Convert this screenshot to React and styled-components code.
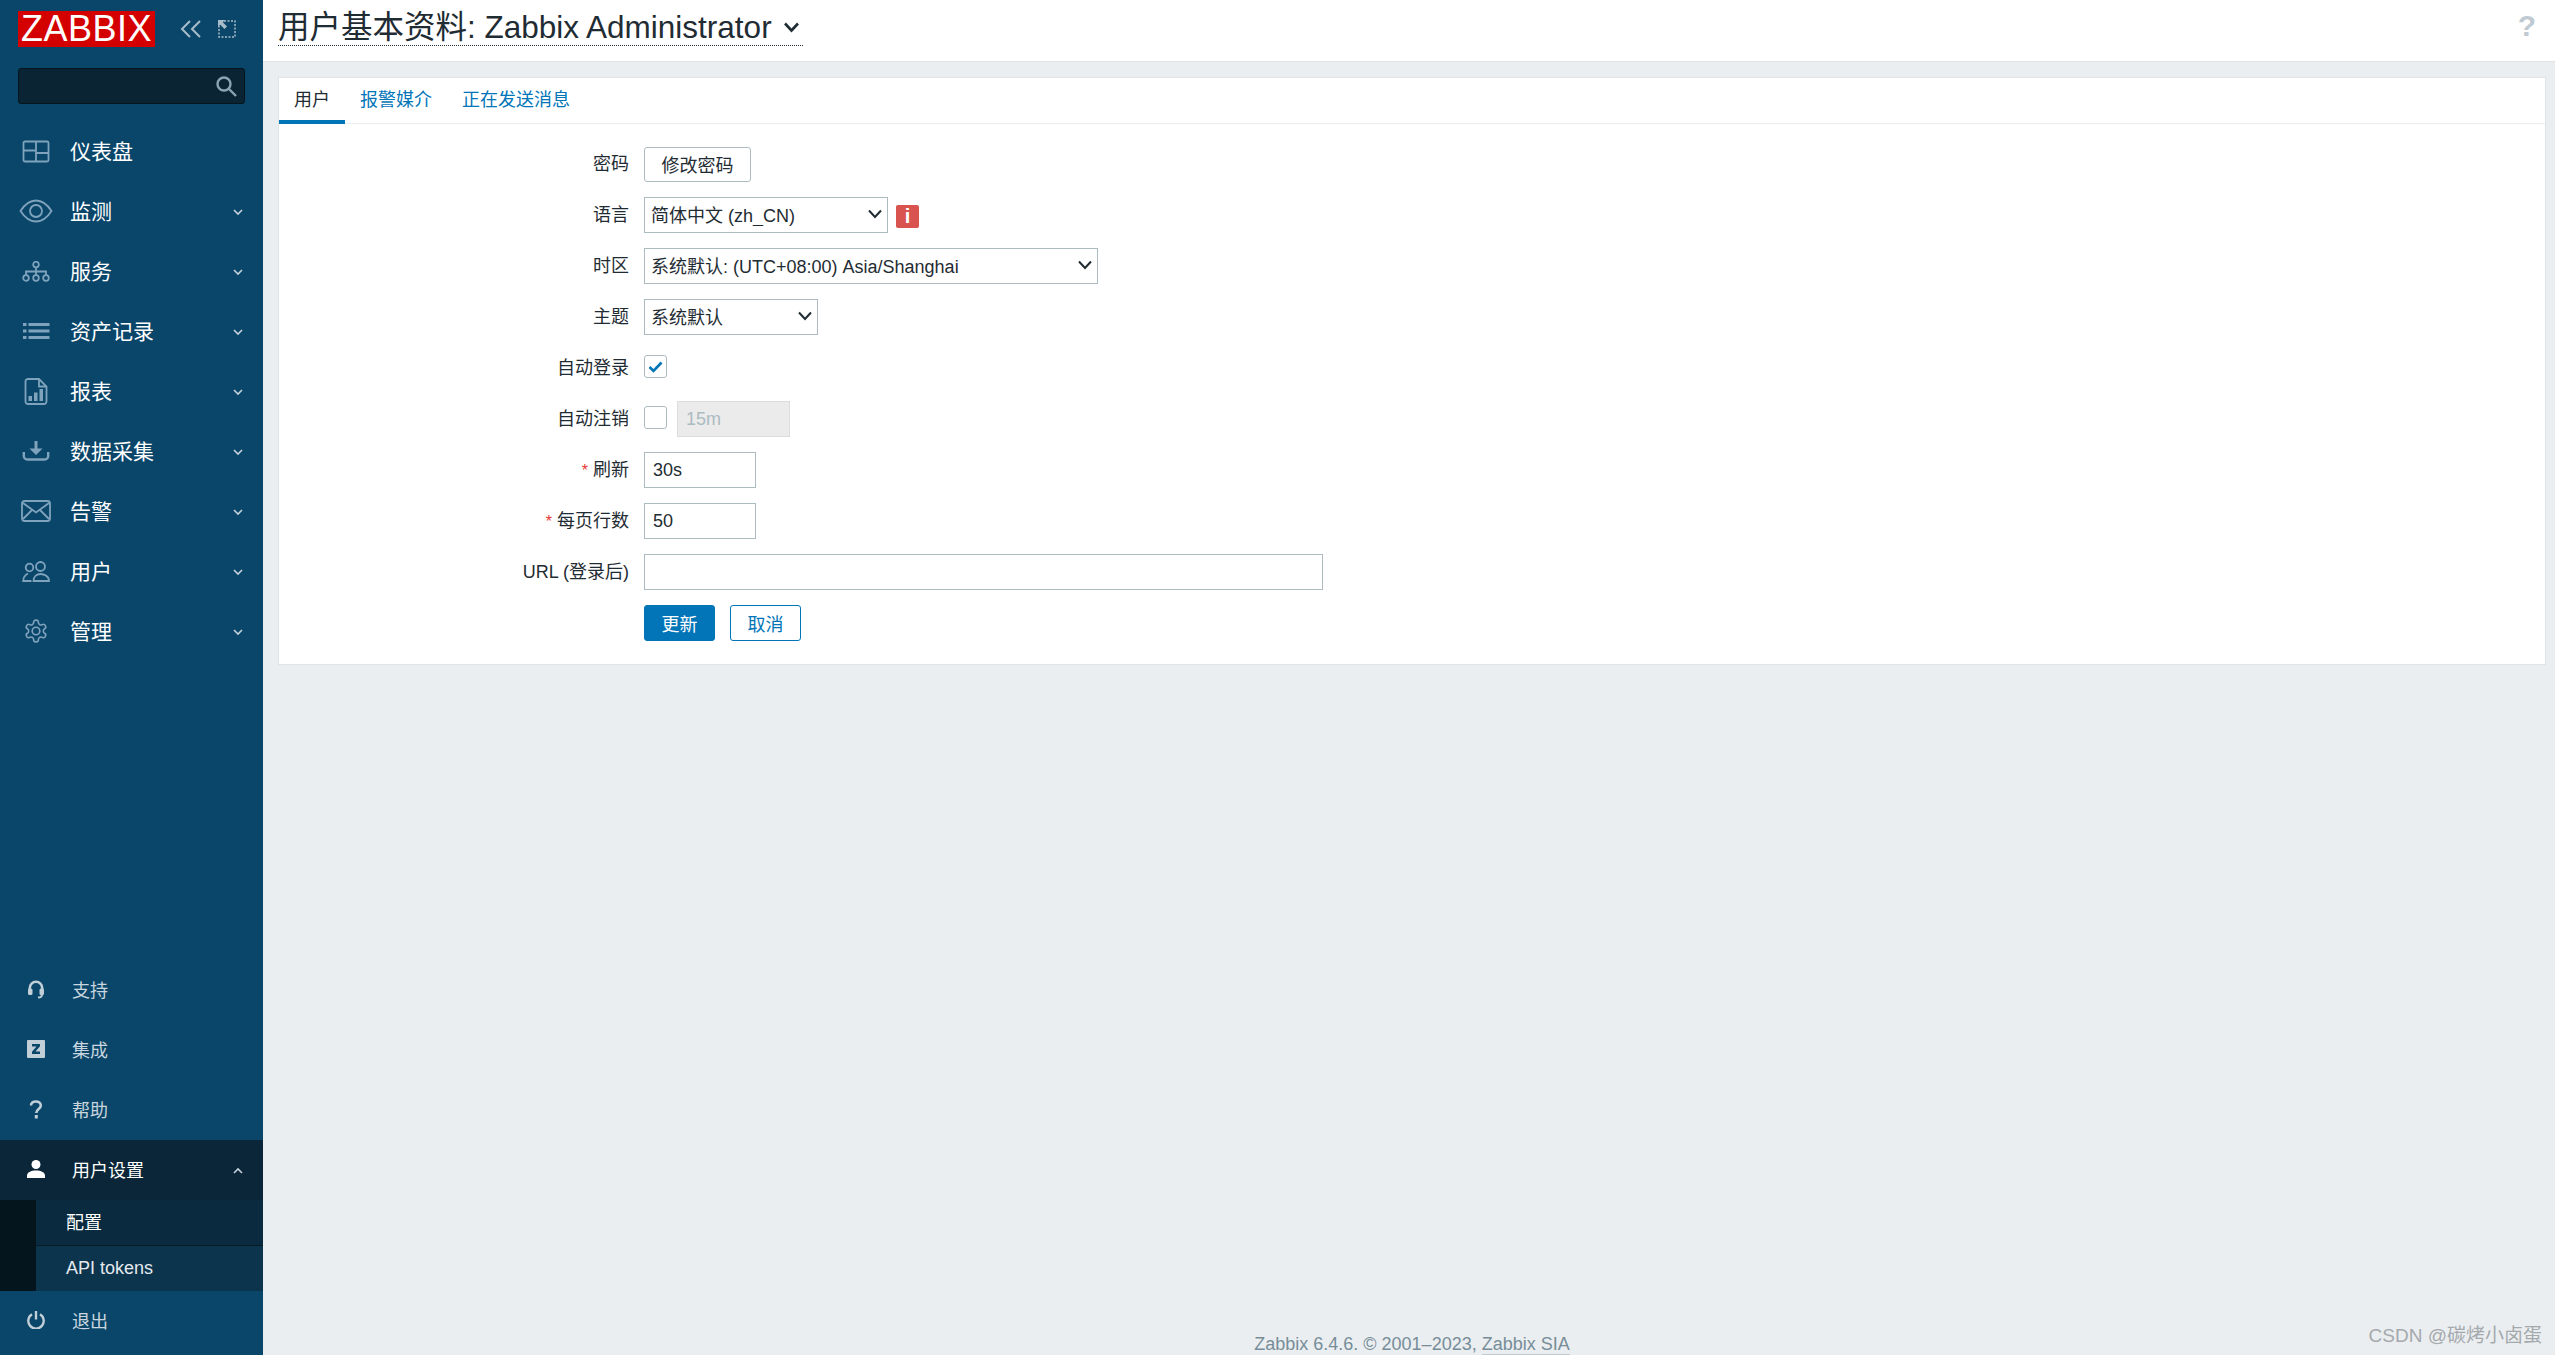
import { styled, createGlobalStyle } from 'styled-components';

const FONT = `"Liberation Sans", "Noto Sans CJK SC", sans-serif`;

const GlobalStyle = createGlobalStyle`
  html, body {
    margin: 0;
    padding: 0;
    background: #ebeef0;
    font-family: ${FONT};
    color: #1f2c33;
  }
  * {
    box-sizing: border-box;
  }
`;

const stroke = {
  fill: 'none',
  stroke: 'currentColor',
  strokeWidth: 1.8,
};

const NavIcons = {
  dashboard: (
    <svg width="28" height="23" viewBox="0 0 28 23" {...stroke}>
      <rect x="1.5" y="1.500" width="25" height="20" rx="1.500" />
      <path d="M14 1.500v20M1.500 10.500H14M14 13h12.500" />
    </svg>
  ),
  monitoring: (
    <svg width="34" height="24" viewBox="0 0 34 24" {...stroke}>
      <path d="M1.500 12C6 5 11 1.500 17 1.500S28 5 32.500 12C28 19 23 22.500 17 22.500S6 19 1.500 12z" />
      <circle cx="17" cy="12" r="6" />
    </svg>
  ),
  services: (
    <svg width="28" height="21" viewBox="0 0 28 21" {...stroke}>
      <circle cx="14" cy="3.500" r="2.800" />
      <circle cx="4" cy="17" r="2.800" />
      <circle cx="14" cy="17" r="2.800" />
      <circle cx="24" cy="17" r="2.800" />
      <path d="M14 6.500v7.500M4 14v-3.500h20V14" />
    </svg>
  ),
  inventory: (
    <svg width="28" height="16" viewBox="0 0 28 16" fill="currentColor">
      <rect x="1" y="0" width="3.500" height="3" />
      <rect x="1" y="6.500" width="3.500" height="3" />
      <rect x="1" y="13" width="3.500" height="3" />
      <rect x="6.500" y="0" width="21" height="3" />
      <rect x="6.500" y="6.500" width="21" height="3" />
      <rect x="6.500" y="13" width="21" height="3" />
    </svg>
  ),
  reports: (
    <svg width="24" height="27" viewBox="0 0 24 27">
      <path {...stroke} d="M4 1h11l7.500 7.500V23.500a2.500 2.500 0 0 1-2.500 2.500H4a2.500 2.500 0 0 1-2.500-2.500V3.500A2.500 2.500 0 0 1 4 1z" />
      <path {...stroke} d="M15 1v7.500h7.500" />
      <path fill="currentColor" d="M4.500 18h3.500v5H4.500zM10 14.500h3.500V23H10zM15.500 11H19v12h-3.500z" />
    </svg>
  ),
  data: (
    <svg width="28" height="20" viewBox="0 0 28 20">
      <path fill="currentColor" d="M12.500 0h3v7.500h5L14 14 7.500 7.500h5z" />
      <path fill="none" stroke="currentColor" strokeWidth="2.400" d="M1.800 11v4a3.500 3.500 0 0 0 3.500 3.500h17.400a3.500 3.500 0 0 0 3.500-3.500v-4" />
    </svg>
  ),
  alerts: (
    <svg width="30" height="22" viewBox="0 0 30 22" {...stroke}>
      <rect x="1" y="1" width="28" height="20" rx="2.500" />
      <path d="M2 3l13 9.500L28 3M2 19l9-9M28 19l-9-9" />
    </svg>
  ),
  users: (
    <svg width="28" height="21" viewBox="0 0 28 21" {...stroke}>
      <circle cx="7.500" cy="6.500" r="3.800" />
      <circle cx="18.500" cy="5.500" r="4.500" />
      <path d="M9.500 20H1.200c0-3 1.800-6 4.800-7.500M11.500 20c0-4.500 3-7 7-7s8.500 2.500 8.500 7z" />
    </svg>
  ),
  administration: (
    <svg width="26" height="26" viewBox="0 0 24 24" fill="none" stroke="currentColor" strokeWidth="1.500">
      <path d="M12.200 2h-.4a2 2 0 0 0-2 2v.2a2 2 0 0 1-1 1.700l-.4.300a2 2 0 0 1-2 0l-.200-.100a2 2 0 0 0-2.700.700l-.200.400a2 2 0 0 0 .700 2.700l.200.100a2 2 0 0 1 1 1.700v.5a2 2 0 0 1-1 1.800l-.200.100a2 2 0 0 0-.700 2.700l.200.400a2 2 0 0 0 2.700.700l.200-.100a2 2 0 0 1 2 0l.400.300a2 2 0 0 1 1 1.700v.200a2 2 0 0 0 2 2h.4a2 2 0 0 0 2-2v-.200a2 2 0 0 1 1-1.700l.400-.300a2 2 0 0 1 2 0l.200.100a2 2 0 0 0 2.700-.700l.200-.400a2 2 0 0 0-.700-2.700l-.200-.100a2 2 0 0 1-1-1.800v-.5a2 2 0 0 1 1-1.700l.200-.100a2 2 0 0 0 .700-2.700l-.200-.400a2 2 0 0 0-2.700-.700l-.200.100a2 2 0 0 1-2 0l-.400-.300a2 2 0 0 1-1-1.700V4a2 2 0 0 0-2-2z" />
      <circle cx="12" cy="12" r="3.500" />
    </svg>
  ),
  support: (
    <svg width="18" height="19" viewBox="0 0 18 19">
      <path fill="none" stroke="currentColor" strokeWidth="2.600" d="M2.800 11V8a6.200 6.200 0 0 1 12.400 0v3" />
      <rect x="1" y="8.500" width="4.500" height="6.500" rx="1.500" fill="currentColor" />
      <rect x="12.500" y="8.500" width="4.500" height="6.500" rx="1.500" fill="currentColor" />
      <path fill="none" stroke="currentColor" strokeWidth="2" d="M15 14.500c0 2-1.500 3-4 3" />
    </svg>
  ),
  integrations: (
    <svg width="18" height="18" viewBox="0 0 18 18">
      <path fill="currentColor" fillRule="evenodd" d="M1 0h16a1 1 0 0 1 1 1v16a1 1 0 0 1-1 1H1a1 1 0 0 1-1-1V1a1 1 0 0 1 1-1zM5 4v2.500h4.500L5 11.800V14h8v-2.500H8.500L13 6.200V4z" />
    </svg>
  ),
  help: (
    <svg width="14" height="19" viewBox="0 0 14 19">
      <path fill="none" stroke="currentColor" strokeWidth="2.600" d="M2 5.500C2 3 4 1.500 6.800 1.500S11.800 3 11.800 5.500c0 3.500-4.500 3.500-4.500 7.500" />
      <rect x="5.800" y="15" width="3" height="3.500" fill="currentColor" />
    </svg>
  ),
  profile: (
    <svg width="18" height="18" viewBox="0 0 18 18" fill="currentColor">
      <circle cx="9" cy="4.500" r="4.500" />
      <path d="M0 18v-2.500C0 12.500 4 10.500 9 10.500s9 2 9 5V18z" />
    </svg>
  ),
  signout: (
    <svg width="18" height="18" viewBox="0 0 18 18" fill="none" stroke="currentColor" strokeWidth="2.400">
      <path d="M5 3.300A7.700 7.700 0 1 0 13 3.300" />
      <path d="M9 0v8.500" />
    </svg>
  ),
};

const topItems = [
  { key: 'dashboard', label: '仪表盘' },
  { key: 'monitoring', label: '监测', arrow: true },
  { key: 'services', label: '服务', arrow: true },
  { key: 'inventory', label: '资产记录', arrow: true },
  { key: 'reports', label: '报表', arrow: true },
  { key: 'data', label: '数据采集', arrow: true },
  { key: 'alerts', label: '告警', arrow: true },
  { key: 'users', label: '用户', arrow: true },
  { key: 'administration', label: '管理', arrow: true },
];

const Chevron = ({ up }) => (
  <ChevronSvg width="10" height="7" viewBox="0 0 10 7" $up={up}>
    <path d="M1 1l4 4 4-4" fill="none" stroke="currentColor" strokeWidth="1.600" />
  </ChevronSvg>
);

const DropDown = ({ w, text }) => (
  <SelectWrap $w={w}>
    <Select defaultValue="v">
      <option value="v">{text}</option>
    </Select>
    <SelectArrow width="14" height="10" viewBox="0 0 14 10" fill="none" stroke="#1f2c33" strokeWidth="2">
      <path d="M1 1.500l6 6.500 6-6.500" />
    </SelectArrow>
  </SelectWrap>
);

const App = () => {
  return (
    <Page>
      <GlobalStyle />
      <Sidebar>
        <LogoRow>
          <Logo>ZABBIX</Logo>
          <SideTools>
            <svg width="22" height="20" viewBox="0 0 22 20" fill="none" stroke="#a9bcc9" strokeWidth="2">
              <path d="M10 2L2 10l8 8M20 2l-8 8 8 8" />
            </svg>
            <svg width="18" height="18" viewBox="0 0 18 18">
              <path d="M6 1h11v16H1V6" fill="none" stroke="#a9bcc9" strokeWidth="1.500" strokeDasharray="2 1.500" />
              <path d="M0 0h7L4.800 2.200 9 6.500 6.500 9 2.200 4.800 0 7z" fill="#a9bcc9" />
            </svg>
          </SideTools>
        </LogoRow>
        <SearchBox>
          <svg width="22" height="22" viewBox="0 0 22 22" fill="none" stroke="#8aa4b5" strokeWidth="2.400">
            <circle cx="9" cy="9" r="6.500" />
            <path d="M14 14l7 7" />
          </svg>
        </SearchBox>
        <Nav>
          {topItems.map((item) => (
            <NavRow key={item.key}>
              <NavIcon>{NavIcons[item.key]}</NavIcon>
              <NavLabel>{item.label}</NavLabel>
              {item.arrow && <Chevron />}
            </NavRow>
          ))}
        </Nav>
        <BottomNav>
          <UserRow>
            <UserIcon>{NavIcons.support}</UserIcon>
            <UserLabel>支持</UserLabel>
          </UserRow>
          <UserRow>
            <UserIcon>{NavIcons.integrations}</UserIcon>
            <UserLabel>集成</UserLabel>
          </UserRow>
          <UserRow>
            <UserIcon>{NavIcons.help}</UserIcon>
            <UserLabel>帮助</UserLabel>
          </UserRow>
          <UserRow $open>
            <UserIcon $open>{NavIcons.profile}</UserIcon>
            <UserLabel $open>用户设置</UserLabel>
            <Chevron up />
          </UserRow>
          <SubMenu>
            <SubItem $active>配置</SubItem>
            <SubItem>API tokens</SubItem>
          </SubMenu>
          <SignOutRow>
            <UserIcon>{NavIcons.signout}</UserIcon>
            <UserLabel>退出</UserLabel>
          </SignOutRow>
        </BottomNav>
      </Sidebar>

      <Main>
        <Header>
          <TitleButton>
            用户基本资料: Zabbix Administrator
            <svg width="17" height="11" viewBox="0 0 16 11" fill="none" stroke="#1f2c33" strokeWidth="2.600">
              <path d="M1.500 1.500L8 8.500l6.500-7" />
            </svg>
          </TitleButton>
          <HelpMark>?</HelpMark>
        </Header>

        <Content>
          <Panel>
            <Tabs>
              <Tab $active>用户</Tab>
              <Tab>报警媒介</Tab>
              <Tab>正在发送消息</Tab>
            </Tabs>
            <Form>
              <Row>
                <Label>密码</Label>
                <Field>
                  <PlainButton type="button">修改密码</PlainButton>
                </Field>
              </Row>
              <Row>
                <Label>语言</Label>
                <Field>
                  <DropDown w={244} text="简体中文 (zh_CN)" />
                  <InfoBadge>i</InfoBadge>
                </Field>
              </Row>
              <Row>
                <Label>时区</Label>
                <Field>
                  <DropDown w={454} text="系统默认: (UTC+08:00) Asia/Shanghai" />
                </Field>
              </Row>
              <Row>
                <Label>主题</Label>
                <Field>
                  <DropDown w={174} text="系统默认" />
                </Field>
              </Row>
              <Row>
                <Label>自动登录</Label>
                <Field>
                  <CheckBox>
                    <svg width="15" height="12" viewBox="0 0 15 12" fill="none" stroke="#0275b8" strokeWidth="2.600">
                      <path d="M1.500 6l4 4 8-8.500" />
                    </svg>
                  </CheckBox>
                </Field>
              </Row>
              <Row>
                <Label>自动注销</Label>
                <Field>
                  <CheckBox />
                  <TextInput $w={113} disabled defaultValue="15m" />
                </Field>
              </Row>
              <Row>
                <Label>
                  <Required>*</Required>刷新
                </Label>
                <Field>
                  <TextInput $w={112} defaultValue="30s" />
                </Field>
              </Row>
              <Row>
                <Label>
                  <Required>*</Required>每页行数
                </Label>
                <Field>
                  <TextInput $w={112} defaultValue="50" />
                </Field>
              </Row>
              <Row>
                <Label>URL (登录后)</Label>
                <Field>
                  <TextInput $w={679} />
                </Field>
              </Row>
              <Row>
                <span />
                <Field>
                  <PrimaryButton type="button">更新</PrimaryButton>
                  <OutlineButton type="button">取消</OutlineButton>
                </Field>
              </Row>
            </Form>
          </Panel>
          <Footer>
            Zabbix 6.4.6. © 2001–2023, <FooterLink>Zabbix SIA</FooterLink>
          </Footer>
        </Content>
      </Main>
      <Watermark>CSDN @碳烤小卤蛋</Watermark>
    </Page>
  );
};

export default App;

const Page = styled.div`
  display: flex;
  width: 2555px;
  height: 1355px;
  overflow: hidden;
  position: relative;
`;

const Sidebar = styled.aside`
  width: 263px;
  flex: none;
  display: flex;
  flex-direction: column;
  background: #0a466a;
  color: #fff;
`;

const LogoRow = styled.div`
  display: flex;
  align-items: center;
  padding: 11px 0 0 18px;
  height: 47px;
`;

const Logo = styled.div`
  width: 137px;
  height: 36px;
  background: #d40000;
  color: #fff;
  font-size: 36px;
  line-height: 36px;
  text-align: center;
  letter-spacing: 0.5px;
`;

const SideTools = styled.div`
  display: flex;
  align-items: center;
  gap: 16px;
  margin-left: 25px;
`;

const SearchBox = styled.div`
  width: 227px;
  height: 36px;
  margin: 21px 0 0 18px;
  padding-right: 7px;
  display: flex;
  align-items: center;
  justify-content: flex-end;
  background: #0a2433;
  border: 1px solid #04151d;
  border-radius: 3px;
`;

const Nav = styled.nav`
  margin-top: 17px;
  flex: 1;
`;

const NavRow = styled.div`
  display: flex;
  align-items: center;
  height: 60px;
  padding-right: 20px;
`;

const NavIcon = styled.span`
  width: 70px;
  padding-left: 2px;
  flex: none;
  display: flex;
  justify-content: center;
  color: #7fa3bc;
`;

const NavLabel = styled.span`
  flex: 1;
  padding-bottom: 2px;
  font-size: 21px;
  color: #fff;
`;

const ChevronSvg = styled.svg`
  flex: none;
  margin-top: 3px;
  color: #c5d2dc;
  transform: ${(p) => (p.$up ? 'rotate(180deg)' : 'none')};
`;

const BottomNav = styled.div`
  display: flex;
  flex-direction: column;
`;

const UserRow = styled.div`
  display: flex;
  align-items: center;
  height: 60px;
  padding: 0 20px 2px 0;
  background: ${(p) => (p.$open ? '#0a2638' : 'transparent')};
`;

const SignOutRow = styled(UserRow)`
  height: 64px;
  padding-bottom: 6px;
`;

const UserIcon = styled.span`
  width: 72px;
  flex: none;
  display: flex;
  justify-content: center;
  color: ${(p) => (p.$open ? '#fff' : '#c0ced8')};
`;

const UserLabel = styled.span`
  flex: 1;
  font-size: 18px;
  color: ${(p) => (p.$open ? '#fff' : '#c9d6df')};
`;

const SubMenu = styled.div`
  padding-left: 36px;
  background: #04151d;
`;

const SubItem = styled.div`
  height: 45.500px;
  display: flex;
  align-items: center;
  padding: 0 0 ${(p) => (p.$active ? '2px' : '0')} 30px;
  font-size: 18px;
  background: ${(p) => (p.$active ? '#0a2b3f' : '#0d344d')};
  color: ${(p) => (p.$active ? '#fff' : '#e4eaee')};
  border-bottom: ${(p) => (p.$active ? '1px solid #061c29' : 'none')};
`;

const Main = styled.main`
  flex: 1;
  min-width: 0;
  display: flex;
  flex-direction: column;
`;

const Header = styled.header`
  height: 62px;
  flex: none;
  display: flex;
  align-items: flex-start;
  justify-content: space-between;
  padding: 0 19px 0 15px;
  background: #fff;
  border-bottom: 1px solid #dfe4e7;
`;

const TitleButton = styled.div`
  display: flex;
  align-items: center;
  gap: 11px;
  height: 46px;
  padding: 10px 3px 0 0;
  font-size: 31.500px;
  line-height: 35px;
  color: #1f2c33;
  border-bottom: 1px dotted #1f2c33;
  white-space: nowrap;
`;

const HelpMark = styled.span`
  font-size: 30px;
  line-height: 34px;
  font-weight: 700;
  color: #bfcad2;
  margin-top: 9px;
`;

const Content = styled.div`
  flex: 1;
  display: flex;
  flex-direction: column;
  padding: 15px 9px 0 15px;
  min-height: 0;
`;

const Panel = styled.section`
  background: #fff;
  border: 1px solid #dfe4e7;
  height: 588px;
  flex: none;
`;

const Tabs = styled.div`
  display: flex;
  height: 46px;
  border-bottom: 1px solid #ebeef0;
`;

const Tab = styled.div`
  height: 46px;
  padding: 0 15px ${(p) => (p.$active ? '3px' : '6px')};
  display: flex;
  align-items: center;
  font-size: 18px;
  color: ${(p) => (p.$active ? '#1f2c33' : '#0275b8')};
  border-bottom: ${(p) => (p.$active ? '4px solid #0275b8' : 'none')};
`;

const Form = styled.div`
  display: flex;
  flex-direction: column;
  gap: 15px;
  padding-top: 22px;
`;

const Row = styled.div`
  display: grid;
  grid-template-columns: 350px 1fr;
  column-gap: 15px;
  height: 36px;
  align-items: center;
`;

const Label = styled.div`
  font-size: 18px;
  line-height: 24px;
  text-align: right;
  color: #1f2c33;
`;

const Required = styled.span`
  color: #e33734;
  margin-right: 5px;
  font-size: 16px;
`;

const Field = styled.div`
  display: flex;
  align-items: center;
  gap: 10px;
  height: 36px;
`;

const PlainButton = styled.button`
  width: 107px;
  height: 35px;
  padding: 0 0 2px;
  margin-top: 1px;
  background: #fff;
  border: 1px solid #acbbc2;
  border-radius: 3px;
  font: 18px ${FONT};
  color: #1f2c33;
`;

const SelectWrap = styled.div`
  position: relative;
  width: ${(p) => p.$w}px;
  height: 36px;
`;

const Select = styled.select`
  width: 100%;
  height: 36px;
  padding: 1px 24px 0 6px;
  appearance: none;
  background: #fff;
  border: 1px solid #acbbc2;
  border-radius: 0;
  font: 18px ${FONT};
  color: #1f2c33;
`;

const SelectArrow = styled.svg`
  position: absolute;
  right: 6px;
  top: 12px;
  pointer-events: none;
`;

const InfoBadge = styled.span`
  width: 23px;
  height: 23px;
  margin: 3px 0 0 -2px;
  display: flex;
  align-items: center;
  justify-content: center;
  background: #d9534f;
  border-radius: 2px;
  color: #fff;
  font-size: 20px;
  font-weight: 700;
`;

const CheckBox = styled.span`
  width: 23px;
  height: 23px;
  margin-top: -3px;
  flex: none;
  display: flex;
  align-items: center;
  justify-content: center;
  background: #fff;
  border: 1px solid #acbbc2;
  border-radius: 3px;
`;

const TextInput = styled.input`
  width: ${(p) => p.$w}px;
  height: 36px;
  padding: 0 8px;
  background: #fff;
  border: 1px solid #acbbc2;
  border-radius: 0;
  font: 18px ${FONT};
  color: #1f2c33;
  outline: none;

  &:disabled {
    background: #ebebeb;
    border-color: #dcdcdc;
    color: #acbbc2;
  }
`;

const PrimaryButton = styled.button`
  width: 71px;
  height: 36px;
  padding: 0;
  background: #0275b8;
  border: 1px solid #0275b8;
  border-radius: 3px;
  font: 18px ${FONT};
  color: #fff;
`;

const OutlineButton = styled(PrimaryButton)`
  margin-left: 5px;
  background: #fff;
  color: #0275b8;
`;

const Footer = styled.footer`
  margin-top: auto;
  height: 21px;
  text-align: center;
  font-size: 18px;
  line-height: 21px;
  color: #768d99;
  white-space: nowrap;
`;

const FooterLink = styled.span`
  border-bottom: 2px solid #bfcad3;
`;

const Watermark = styled.div`
  position: absolute;
  right: 13px;
  bottom: 8px;
  font-size: 19px;
  color: #a4a9ad;
  white-space: nowrap;
`;
